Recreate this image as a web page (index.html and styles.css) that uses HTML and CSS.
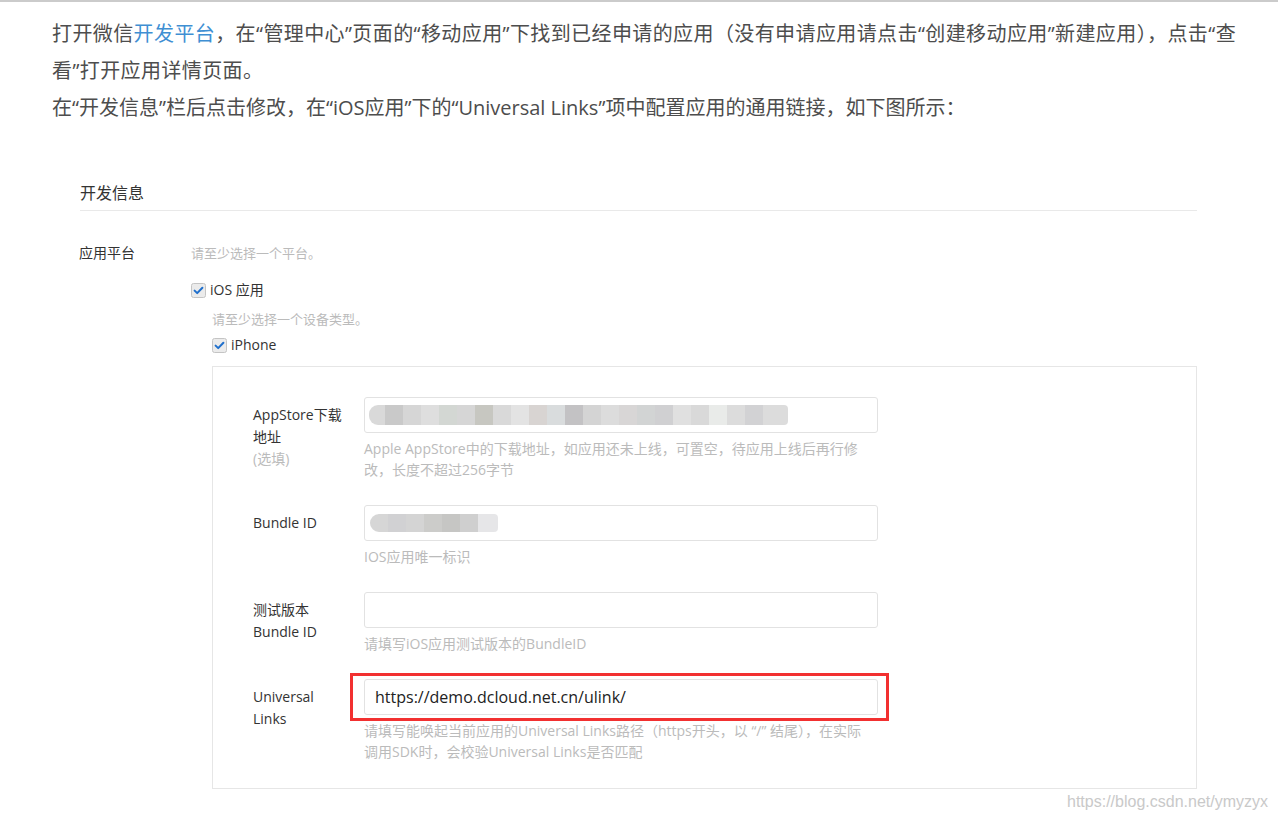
FILE: index.html
```html
<!DOCTYPE html>
<html lang="zh-CN">
<head>
<meta charset="utf-8">
<title>Universal Links 配置</title>
<link rel="stylesheet" href="styles.css">
</head>
<body>
<div class="topbar"></div>
<article class="article">
  <p class="para para-wide">打开微信<a class="link">开发平台</a>，在“管理中心”页面的“移动应用”下找到已经申请的应用（没有申请应用请点击“创建移动应用”新建应用），点击“查看”打开应用详情页面。</p>
  <p class="para">在“开发信息”栏后点击修改，在“iOS应用”下的“Universal Links”项中配置应用的通用链接，如下图所示：</p>

  <figure class="shot">
    <div class="form">
      <div class="form-title">开发信息</div>
      <div class="platform">
        <div class="platform-label">应用平台</div>
        <div class="platform-body">
          <div class="hint">请至少选择一个平台。</div>
          <div class="check">
            <svg class="box" width="15" height="15" viewBox="0 0 15 15"><rect x="0.5" y="0.5" width="14" height="14" rx="2" fill="#ebebeb" stroke="#c4c4c4"/><path d="M3.6 7.6 L6.2 10.1 L11.4 4.7" fill="none" stroke="#1f6fcc" stroke-width="2" stroke-linecap="round" stroke-linejoin="round"/></svg>
            <span>iOS 应用</span>
          </div>
          <div class="device">
            <div class="hint">请至少选择一个设备类型。</div>
            <div class="check">
              <svg class="box" width="15" height="15" viewBox="0 0 15 15"><rect x="0.5" y="0.5" width="14" height="14" rx="2" fill="#ebebeb" stroke="#c4c4c4"/><path d="M3.6 7.6 L6.2 10.1 L11.4 4.7" fill="none" stroke="#1f6fcc" stroke-width="2" stroke-linecap="round" stroke-linejoin="round"/></svg>
              <span>iPhone</span>
            </div>

            <div class="panel">
              <div class="row">
                <div class="row-label">AppStore下载地址<br><span class="opt">(选填)</span></div>
                <div class="field">
                  <div class="input"><span class="blur blur-long"></span></div>
                  <div class="help">Apple AppStore中的下载地址，如应用还未上线，可置空，待应用上线后再行修改，长度不超过256字节</div>
                </div>
              </div>
              <div class="row">
                <div class="row-label">Bundle ID</div>
                <div class="field">
                  <div class="input"><span class="blur blur-short"></span></div>
                  <div class="help">IOS应用唯一标识</div>
                </div>
              </div>
              <div class="row">
                <div class="row-label">测试版本 Bundle ID</div>
                <div class="field">
                  <div class="input"></div>
                  <div class="help">请填写iOS应用测试版本的BundleID</div>
                </div>
              </div>
              <div class="row">
                <div class="row-label">Universal Links</div>
                <div class="field">
                  <div class="input-wrap">
                    <div class="input">https://demo.dcloud.net.cn/ulink/</div>
                    <div class="mark"></div>
                  </div>
                  <div class="help">请填写能唤起当前应用的Universal Links路径（https开头，以 “/” 结尾），在实际调用SDK时，会校验Universal Links是否匹配</div>
                </div>
              </div>
            </div>
          </div>
        </div>
      </div>
    </div>
    <div class="watermark">https://blog.csdn.net/ymyzyx</div>
  </figure>
</article>
</body>
</html>
```

FILE: styles.css
```css
html, body {
  margin: 0;
  background: #ffffff;
}

body {
  font-family: "Open Sans", "Noto Sans CJK SC", sans-serif;
}

.topbar {
  height: 2px;
  background: #cbcbcb;
}

.article {
  padding: 13px 6px 0 52px;
}

.para {
  margin: 0;
  max-width: 1174px;
  font-size: 20px;
  line-height: 37px;
  color: #4d4d4d;
}

.para-wide {
  max-width: 1196px;
  letter-spacing: 0.4px;
}

.link {
  color: #3f8fd3;
  text-decoration: none;
}

.shot {
  margin: 56px 0 0 0;
}

.form {
  margin-left: 27px;
  width: 1118px;
  color: #333333;
  font-size: 14px;
}

.form-title {
  font-size: 16px;
  line-height: 22px;
  padding-bottom: 6px;
  border-bottom: 1px solid #e9e9e9;
  margin-left: 1px;
}

.platform {
  display: flex;
  margin-top: 32px;
}

.platform-label {
  flex: none;
  width: 112px;
  line-height: 20px;
}

.platform-body {
  flex: 1;
  min-width: 0;
}

.hint {
  font-size: 13px;
  line-height: 20px;
  color: #bbbbbb;
}

.check {
  display: flex;
  align-items: center;
  gap: 4px;
  margin-top: 17px;
  line-height: 20px;
  color: #333333;
}

.box {
  flex: none;
  display: block;
}

.device {
  margin: 9px 0 0 21px;
}

.device .check {
  margin-top: 6px;
}

.panel {
  margin-top: 11px;
  border: 1px solid #e6e6e6;
  padding: 30px 40px 26px;
}

.row {
  display: flex;
  margin-bottom: 25px;
}

.row:last-child {
  margin-bottom: 0;
}

.row-label {
  flex: none;
  width: 94px;
  margin-right: 17px;
  padding-top: 7px;
  line-height: 22px;
  color: #333333;
}

.opt {
  color: #bbbbbb;
}

.field {
  width: 514px;
}

.input {
  box-sizing: border-box;
  height: 36px;
  border: 1px solid #e2e2e2;
  border-radius: 3px;
  display: flex;
  align-items: center;
  padding: 0 10px;
  font-size: 16px;
  color: #222222;
  background: #ffffff;
}

.input-wrap {
  position: relative;
}

.mark {
  position: absolute;
  left: -14px;
  right: -11px;
  top: -6px;
  bottom: -6px;
  border: 3px solid #f23030;
  pointer-events: none;
}

.help {
  max-width: 505px;
  margin-top: 5px;
  font-size: 14px;
  line-height: 21px;
  color: #bbbbbb;
}

.blur {
  display: block;
  height: 20px;
  margin-left: -6px;
  border-radius: 9px 4px 4px 9px;
  filter: blur(0.7px);
}

.blur-long {
  width: 419px;
  background: linear-gradient(90deg,
    #d9d9d9 0 16px, #c9c9c9 16px 34px, #d6d6d6 34px 52px, #dedede 52px 70px,
    #d3d7d3 70px 88px, #d6d6d6 88px 106px, #c7c7c1 106px 124px, #d9d9d9 124px 142px,
    #e3e3e3 142px 160px, #d8d4d2 160px 178px, #d9dcdd 178px 196px, #c3c2c4 196px 214px,
    #d4d4d4 214px 232px, #dcdcdc 232px 250px, #d8d6d6 250px 268px, #d2d4d4 268px 286px,
    #d0d0d2 286px 304px, #e0e0e0 304px 322px, #d9d9d9 322px 340px, #e9ebe9 340px 358px,
    #dcdcdc 358px 376px, #d2d2d4 376px 394px, #dcdcdc 394px 419px);
}

.blur-short {
  width: 128px;
  height: 18px;
  margin-left: -5px;
  background: linear-gradient(90deg,
    #d6d6d6 0 18px, #d1d1d3 18px 36px, #d4d4d4 36px 54px, #ccccca 54px 72px,
    #c6c6c4 72px 90px, #cfcfcf 90px 108px, #e6e6e8 108px 128px);
}

.watermark {
  display: flex;
  justify-content: flex-end;
  margin-top: 4px;
  padding-right: 4px;
  font-family: "Liberation Sans", sans-serif;
  font-size: 16px;
  line-height: 18px;
  color: #c9c9c9;
}
```
